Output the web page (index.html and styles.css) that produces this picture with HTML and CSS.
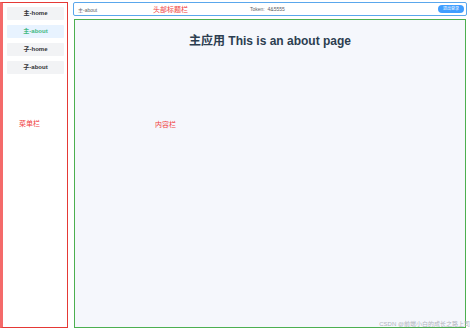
FILE: index.html
```html
<!DOCTYPE html>
<html lang="zh-CN">
<head>
    <meta charset="UTF-8">
    <meta name="viewport" content="width=device-width, initial-scale=1.0">
    <title>主应用 - about</title>
    <link rel="stylesheet" href="styles.css">
</head>
<body>
    <div class="layout">
        <aside class="sidebar">
            <nav class="menu">
                <a class="menu-item">主-home</a>
                <a class="menu-item active">主-about</a>
                <a class="menu-item">子-home</a>
                <a class="menu-item">子-about</a>
            </nav>
            <span class="label menu-label">菜单栏</span>
        </aside>
        <div class="main">
            <header class="header">
                <span class="crumb">主-about</span>
                <span class="label header-label">头部标题栏</span>
                <span class="token">Token:&nbsp; 4&amp;5555</span>
                <button class="logout">退出登录</button>
            </header>
            <section class="content">
                <h1>主应用 This is an about page</h1>
                <span class="label content-label">内容栏</span>
            </section>
        </div>
    </div>
    <div class="watermark">CSDN @前端小白的成长之路上司</div>
</body>
</html>
```

FILE: styles.css
```css
body {
    margin: 0;
    background: #ffffff;
    font-family: "Liberation Sans", Arial, "Noto Sans CJK SC", sans-serif;
    color: #2c3e50;
}
.layout {
    display: flex;
    height: 333px;
    padding: 2px 7px 5px 0;
    box-sizing: border-box;
    gap: 5px;
}
.sidebar {
    width: 68px;
    box-sizing: border-box;
    border: 1px solid #e53935;
    border-left: 3px solid #f46a6a;
    padding: 4px 3px 0 4px;
    display: flex;
    flex-direction: column;
}
.menu {
    display: flex;
    flex-direction: column;
    gap: 5px;
}
.menu-item {
    display: block;
    height: 13px;
    line-height: 13px;
    background: #f2f3f5;
    text-align: center;
    font-size: 6px;
    font-weight: bold;
    color: #303133;
    border-radius: 1px;
}
.menu-item.active {
    background: #e8f3ff;
    color: #42b983;
}
.label {
    color: #f04040;
    font-size: 7px;
}
.menu-label {
    margin: 44px 0 0 12px;
}
.main {
    flex: 1;
    display: flex;
    flex-direction: column;
    gap: 3px;
}
.header {
    height: 14px;
    box-sizing: border-box;
    border: 1.5px solid #5aa7ec;
    border-radius: 2px;
    display: flex;
    align-items: center;
    padding: 0 2px 0 4px;
    font-size: 5px;
    color: #606266;
}
.crumb {
    width: 75px;
}
.header-label {
    font-size: 7px;
    width: 97px;
}
.token {
    flex: 1;
}
.logout {
    height: 8px;
    padding: 0 5px;
    border: none;
    border-radius: 4px;
    background: #409eff;
    color: #ffffff;
    font-size: 4px;
    font-family: inherit;
    line-height: 8px;
}
.content {
    flex: 1;
    margin: 0 1px;
    border: 1.5px solid #4caf50;
    background: #f5f7fc;
    display: flex;
    flex-direction: column;
}
.content h1 {
    margin: 11px 0 0;
    text-align: center;
    font-size: 12px;
    font-weight: bold;
    color: #2c3e50;
}
.content-label {
    margin: 71px 0 0 80px;
}
.watermark {
    position: absolute;
    right: 4px;
    bottom: 5px;
    font-size: 6px;
    color: #b0b4bc;
}
```
